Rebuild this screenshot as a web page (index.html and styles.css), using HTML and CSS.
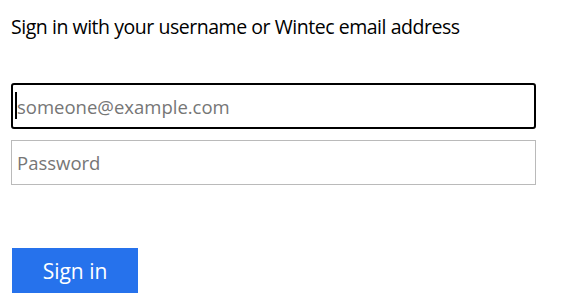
FILE: index.html
```html
<!DOCTYPE html>
<html>
<head>
<meta charset="utf-8">
<link rel="stylesheet" href="styles.css">
</head>
<body>
<div class="page">
  <p class="intro">Sign in with your username or Wintec email address</p>
  <form class="form">
    <div class="fields">
      <div class="field field-focus"><span class="caret"></span><span class="ph">someone@example.com</span></div>
      <div class="field"><span class="ph">Password</span></div>
    </div>
    <div class="submit-row">
      <span class="btn">Sign in</span>
    </div>
  </form>
</div>
</body>
</html>
```

FILE: styles.css
```css
html, body {
  margin: 0;
  padding: 0;
  background: #fff;
}
.page {
  padding: 0 0 0 11px;
  font-family: "Open Sans", "Noto Sans", sans-serif;
  color: #000;
}
.intro {
  margin: 0;
  padding-top: 13px;
  font-size: 19.5px;
  letter-spacing: -0.46px;
  line-height: 28px;
  height: 70px;
}
.form {
  margin: 0;
}
.fields {
  display: flex;
  flex-direction: column;
  gap: 11px;
  width: 525px;
}
.field {
  box-sizing: border-box;
  height: 45px;
  border: 1px solid #bababa;
  display: flex;
  align-items: center;
  padding-left: 5px;
  font-size: 18.5px;
  color: #767676;
}
.field-focus {
  height: 46px;
  border: 2px solid #000;
  border-radius: 3px;
  padding-left: 4px;
  position: relative;
}
.caret {
  position: absolute;
  left: 2px;
  top: 7px;
  width: 2px;
  height: 27px;
  background: #000;
}
.submit-row {
  padding-top: 63px;
  padding-left: 1px;
}
.btn {
  display: flex;
  align-items: center;
  justify-content: center;
  width: 126px;
  height: 45px;
  background: #2672ec;
  color: #fff;
  font-size: 21px;
}
```
